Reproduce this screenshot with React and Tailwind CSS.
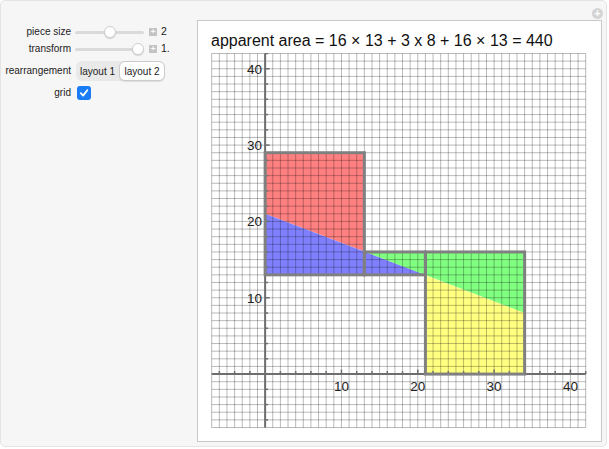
import React from "react";

const S = 374 / 49;
const X = (u) => 0.7 + (u + 7) * S;
const Y = (v) => 0.5 + (42 - v) * S;
const pts = (list) => list.map(([u, v]) => `${X(u).toFixed(2)},${Y(v).toFixed(2)}`).join(" ");

const pieces = [
  { fill: "#ff8080", p: [[0, 29], [13, 29], [13, 16.05], [0, 21]] },
  { fill: "#8080ff", p: [[0, 21], [21, 13], [0, 13]] },
  { fill: "#80ff80", p: [[13, 16.05], [34, 16], [34, 8]] },
  { fill: "#ffff80", p: [[21, 12.95], [34, 8], [34, 0], [21, 0]] },
];

const boxes = [
  [0, 13, 13, 29],
  [13, 13, 21, 16],
  [21, 0, 34, 16],
];

const range = [];
for (let i = -7; i <= 42; i++) range.push(i);
const ticks = [];
for (let i = -6; i <= 42; i += 2) if (i !== 0) ticks.push(i);

function Plot() {
  return (
    <svg width="376" height="376" className="block" style={{ fontFamily: '"Liberation Sans", Arial, sans-serif' }}>
      {pieces.map((pc, i) => (
        <polygon key={i} points={pts(pc.p)} fill={pc.fill} />
      ))}
      {range.map((i) => (
        <g key={i}>
          <line x1={X(i)} x2={X(i)} y1={Y(42)} y2={Y(-7)} stroke="#000" strokeOpacity="0.27" strokeWidth="1" />
          <line x1={X(-7)} x2={X(42)} y1={Y(i)} y2={Y(i)} stroke="#000" strokeOpacity="0.27" strokeWidth="1" />
        </g>
      ))}
      <line x1={X(-7)} x2={X(42)} y1={Y(0)} y2={Y(0)} stroke="#6e6e6e" strokeWidth="2" />
      <line x1={X(0)} x2={X(0)} y1={Y(42)} y2={Y(-7)} stroke="#6e6e6e" strokeWidth="2" />
      {ticks.map((t) => {
        const major = t % 10 === 0;
        const len = major ? 4.5 : 3;
        return (
          <g key={t}>
            <line x1={X(t)} x2={X(t)} y1={Y(0)} y2={Y(0) - len} stroke="#6e6e6e" strokeWidth="1.5" />
            <line x1={X(0)} x2={X(0) + len} y1={Y(t)} y2={Y(t)} stroke="#6e6e6e" strokeWidth="1.5" />
          </g>
        );
      })}
      {boxes.map(([a, b, c, d], i) => (
        <rect
          key={i}
          x={X(a)}
          y={Y(d)}
          width={X(c) - X(a)}
          height={Y(b) - Y(d)}
          fill="none"
          stroke="#808080"
          strokeWidth="3"
        />
      ))}
      {[10, 20, 30, 40].map((t) => (
        <g key={t}>
          <text x={X(t)} y={Y(0) + 17} fontSize="13.5" textAnchor="middle" fill="#222">
            {t}
          </text>
          <text x={X(0) - 3} y={Y(t) + 5} fontSize="13.5" textAnchor="end" fill="#222">
            {t}
          </text>
        </g>
      ))}
    </svg>
  );
}

function Slider({ pos, value }) {
  return (
    <div className="flex items-center h-[16px]">
      <div className="relative w-[69px] h-[16px] flex items-center">
        <div className="w-full h-[3px] rounded-full bg-[#dadada]" />
        <div
          className="absolute top-[2px] w-[12px] h-[12px] rounded-full bg-white border border-[#cfcfcf] shadow-[0_1px_1px_rgba(0,0,0,0.15)]"
          style={{ left: pos - 6 }}
        />
      </div>
      <div className="ml-[5px] w-[8px] h-[8px] bg-[#c4c4c4] flex items-center justify-center">
        <span className="text-white text-[8px] leading-none font-bold">+</span>
      </div>
      <span className="ml-[4px] text-[10.5px] text-[#222]">{value}</span>
    </div>
  );
}

function Label({ children }) {
  return <div className="w-[70px] text-right text-[10px] text-[#222] leading-none">{children}</div>;
}

export default function App() {
  return (
    <div className="w-[609px] h-[449px] bg-white" style={{ fontFamily: '"Liberation Sans", Arial, sans-serif' }}>
      <div className="relative w-[607px] h-[447px] rounded-[5px] border border-[#e4e4e4] bg-[#f6f6f6] flex">
        <div className="w-[196px] flex flex-col pt-[23px]">
          <div className="flex items-center gap-[4px]">
            <Label>piece size</Label>
            <Slider pos={35} value="2" />
          </div>
          <div className="flex items-center gap-[4px] mt-[1px]">
            <Label>transform</Label>
            <Slider pos={63} value="1." />
          </div>
          <div className="flex items-center gap-[5px] mt-[4px]">
            <Label>rearrangement</Label>
            <div className="flex items-center h-[20px] w-[89px] rounded-[6px] bg-[#e9e9e9] text-[10px] text-[#222]">
              <div className="w-[43px] text-center">layout 1</div>
              <div className="flex-1 h-[20px] flex items-center justify-center rounded-[6px] bg-white border border-[#cccccc] shadow-[0_1px_1px_rgba(0,0,0,0.1)]">
                layout 2
              </div>
            </div>
          </div>
          <div className="flex items-center gap-[6px] mt-[5px]">
            <Label>grid</Label>
            <div className="w-[14px] h-[14px] rounded-[3px] bg-[#1a7cf5] flex items-center justify-center">
              <svg width="10" height="10" viewBox="0 0 10 10">
                <path d="M1.8 5.2 L4.1 7.6 L8.3 2.2" fill="none" stroke="#fff" strokeWidth="1.8" strokeLinecap="round" strokeLinejoin="round" />
              </svg>
            </div>
          </div>
        </div>
        <div className="mt-[19px] w-[405px] h-[422px] border border-[#c8c8c8] bg-white pl-[13px]">
          <div className="h-[32px] pt-[11px] text-[16px] leading-[18px] text-[#111] whitespace-nowrap">
            apparent area = 16 × 13 + 3 x 8 + 16 × 13 = 440
          </div>
          <Plot />
        </div>
        <div className="absolute left-[591px] top-[7px] w-[11px] h-[11px] rounded-full bg-[#d4d4d4] flex items-center justify-center">
          <span className="text-white text-[10px] leading-none font-bold">+</span>
        </div>
      </div>
    </div>
  );
}
